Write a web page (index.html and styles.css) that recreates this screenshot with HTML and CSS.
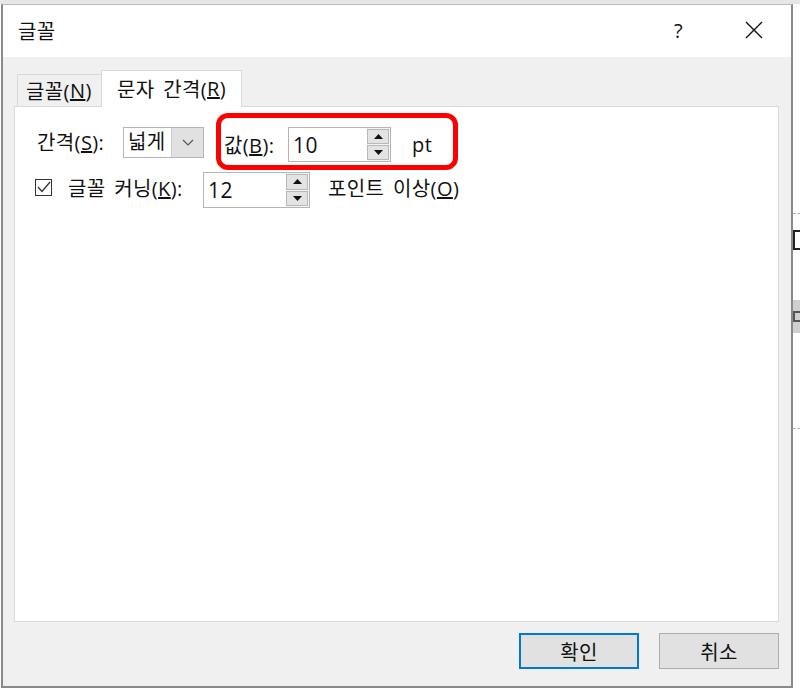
FILE: index.html
```html
<!DOCTYPE html>
<html lang="ko">
<head>
<meta charset="utf-8">
<title>글꼴</title>
<link rel="stylesheet" href="styles.css">
</head>
<body>
<div class="screen">
  <div class="dialog">
    <div class="titlebar">
      <span class="title">글꼴</span>
      <span class="help">?</span>
      <span class="close">
        <svg width="18" height="18" viewBox="0 0 18 18"><path d="M1 1 L17 17 M17 1 L1 17" stroke="#111" stroke-width="1.4" fill="none"/></svg>
      </span>
    </div>
    <div class="body">
      <div class="tabs">
        <div class="tab">글꼴(<u>N</u>)</div>
        <div class="tab active">문자 간격(<u>R</u>)</div>
      </div>
      <div class="panel">
        <div class="row row1">
          <span class="lbl lbl-spacing">간격(<u>S</u>):</span>
          <div class="combo">
            <span class="combo-text">넓게</span>
            <span class="combo-btn">
              <svg width="12" height="7" viewBox="0 0 12 7"><path d="M1 1 L6 6 L11 1" stroke="#555" stroke-width="1.2" fill="none"/></svg>
            </span>
          </div>
          <div class="group">
            <span class="annot"></span>
            <span class="lbl lbl-value">값(<u>B</u>):</span>
            <div class="spin spin-value">
              <span class="spin-text">10</span>
              <span class="spinner">
                <span class="sbtn"><svg width="9" height="5" viewBox="0 0 9 5"><path d="M0 5 L4.5 0 L9 5 Z" fill="#111"/></svg></span>
                <span class="sbtn"><svg width="9" height="5" viewBox="0 0 9 5"><path d="M0 0 L4.5 5 L9 0 Z" fill="#111"/></svg></span>
              </span>
            </div>
            <span class="unit">pt</span>
          </div>
        </div>
        <div class="row row2">
          <span class="check">
            <svg width="14" height="12" viewBox="0 0 14 12"><path d="M1 6 L5 10.5 L13 1" stroke="#333" stroke-width="1.3" fill="none"/></svg>
          </span>
          <span class="lbl lbl-kern">글꼴 커닝(<u>K</u>):</span>
          <div class="spin spin-kern">
            <span class="spin-text">12</span>
            <span class="spinner">
              <span class="sbtn"><svg width="9" height="5" viewBox="0 0 9 5"><path d="M0 5 L4.5 0 L9 5 Z" fill="#111"/></svg></span>
              <span class="sbtn"><svg width="9" height="5" viewBox="0 0 9 5"><path d="M0 0 L4.5 5 L9 0 Z" fill="#111"/></svg></span>
            </span>
          </div>
          <span class="lbl lbl-points">포인트 이상(<u>O</u>)</span>
        </div>
      </div>
      <div class="footer">
        <button class="btn default">확인</button>
        <button class="btn">취소</button>
      </div>
    </div>
  </div>
  <div class="edge">
    <span class="dots d1"></span>
    <span class="ebox"></span>
    <span class="eband"><span class="ebox2"></span></span>
    <span class="dots d2"></span>
  </div>
</div>
</body>
</html>
```

FILE: styles.css
```css
html, body {
  margin: 0;
  padding: 0;
  background: #ffffff;
}
body {
  font-family: "Open Sans", "Noto Sans CJK KR", sans-serif;
  font-size: 20px;
  word-spacing: 3px;
  letter-spacing: 0.4px;
  color: #111;
  width: 800px;
  height: 693px;
  overflow: hidden;
}
.screen {
  display: flex;
  align-items: flex-start;
  padding-top: 4px;
  background: linear-gradient(#e6e6e6, #e6e6e6) top / 100% 4px no-repeat;
}
.dialog {
  margin-left: 1px;
  width: 792px;
  height: 684px;
  box-sizing: border-box;
  border: 2px solid #8a8a8a;
  border-top: 1px solid #bdbdbd;
  display: flex;
  flex-direction: column;
  background: #f0f0f0;
}
.titlebar {
  height: 52px;
  flex: none;
  background: #ffffff;
  display: flex;
  align-items: center;
  padding-left: 15px;
}
.title {
  font-size: 20px;
  flex: 1;
  margin-top: -2px;
}
.help {
  font-size: 20px;
  width: 20px;
  margin-right: 51px;
  margin-top: -2px;
}
.close {
  display: flex;
  margin-right: 28px;
  margin-top: -3px;
}
.body {
  flex: 1;
  display: flex;
  flex-direction: column;
}
.tabs {
  height: 49px;
  flex: none;
  display: flex;
  align-items: flex-end;
  padding-left: 14px;
  box-sizing: border-box;
}
.tab {
  height: 32px;
  box-sizing: border-box;
  padding: 0 0 0 8px;
  width: 85px;
  border: 1px solid #d9d9d9;
  border-bottom: none;
  background: #f0f0f0;
  display: flex;
  align-items: center;
  white-space: nowrap;
}
.tab.active {
  width: 141px;
  height: 37px;
  background: #ffffff;
  margin-left: -1px;
  margin-bottom: -1px;
  padding-left: 15px;
  padding-bottom: 2px;
  position: relative;
  z-index: 1;
}
.panel {
  margin-left: 11px;
  width: 765px;
  height: 516px;
  box-sizing: border-box;
  border: 1px solid #d9d9d9;
  background: #ffffff;
  padding: 20px 0 0 22px;
  flex: none;
}
.row {
  display: flex;
  align-items: center;
}
.row1 {
  height: 35px;
  align-items: flex-start;
}
.row2 {
  margin-top: 10px;
  height: 36px;
}
.lbl {
  white-space: nowrap;
}
.lbl-spacing {
  width: 86px;
  line-height: 31px;
}
.combo {
  width: 81px;
  height: 31px;
  box-sizing: border-box;
  border: 1px solid #b5b5b5;
  display: flex;
  background: #ffffff;
}
.combo-text {
  flex: 1;
  padding-left: 4px;
  line-height: 27px;
}
.combo-btn {
  width: 31px;
  background: #e1e1e1;
  border-left: 1px solid #cccccc;
  display: flex;
  align-items: center;
  justify-content: center;
}
.group {
  position: relative;
  display: flex;
  align-items: center;
  height: 35px;
  margin-left: 20px;
}
.annot {
  position: absolute;
  left: -8px;
  top: -14px;
  width: 242px;
  height: 57px;
  box-sizing: border-box;
  border: 5px solid #ff0000;
  border-radius: 12px;
}
.lbl-value {
  width: 64px;
}
.spin {
  height: 35px;
  box-sizing: border-box;
  border: 1px solid #b5b5b5;
  background: #ffffff;
  display: flex;
  align-items: center;
}
.spin-value {
  width: 103px;
}
.spin-kern {
  width: 107px;
  height: 36px;
}
.spin-text {
  flex: 1;
  padding-left: 4px;
  font-size: 21px;
}
.spinner {
  width: 23px;
  align-self: stretch;
  display: flex;
  flex-direction: column;
  gap: 1px;
  padding: 1px 1px 1px 0;
  box-sizing: border-box;
  background: #f4f4f4;
}
.sbtn {
  flex: 1;
  background: #e3e3e3;
  border: 1px solid #b8b8b8;
  display: flex;
  align-items: center;
  justify-content: center;
}
.unit {
  margin-left: 21px;
}
.check {
  width: 17px;
  height: 17px;
  box-sizing: border-box;
  border: 1px solid #333;
  background: #ffffff;
  margin-left: -2px;
  margin-top: -6px;
  display: flex;
  align-items: center;
  justify-content: center;
}
.lbl-kern {
  margin-left: 16px;
  width: 135px;
  margin-top: -6px;
}
.lbl-points {
  margin-left: 18px;
  margin-top: -6px;
}
.footer {
  display: flex;
  justify-content: flex-end;
  gap: 20px;
  padding: 11px 12px 0 0;
}
.btn {
  width: 120px;
  height: 36px;
  box-sizing: border-box;
  background: #e1e1e1;
  border: 1px solid #adadad;
  font-family: inherit;
  font-size: 20px;
  letter-spacing: 0.4px;
  color: #111;
  padding: 0;
  margin: 0;
}
.btn.default {
  border: 2px solid #0078d7;
}
.edge {
  flex: 1;
  height: 689px;
  display: flex;
  flex-direction: column;
}
.dots {
  height: 0;
  border-top: 1px dashed #b0b0b0;
}
.d1 { margin-top: 209px; }
.ebox {
  margin-top: 16px;
  height: 20px;
  border: 2px solid #222;
  border-right: none;
  box-sizing: border-box;
  background: #ffffff;
}
.eband {
  margin-top: 50px;
  height: 33px;
  background: #cfcfcf;
  display: flex;
  align-items: center;
}
.ebox2 {
  width: 100%;
  height: 11px;
  border: 2px solid #555;
  border-right: none;
  box-sizing: border-box;
}
.d2 { margin-top: 95px; }
```
